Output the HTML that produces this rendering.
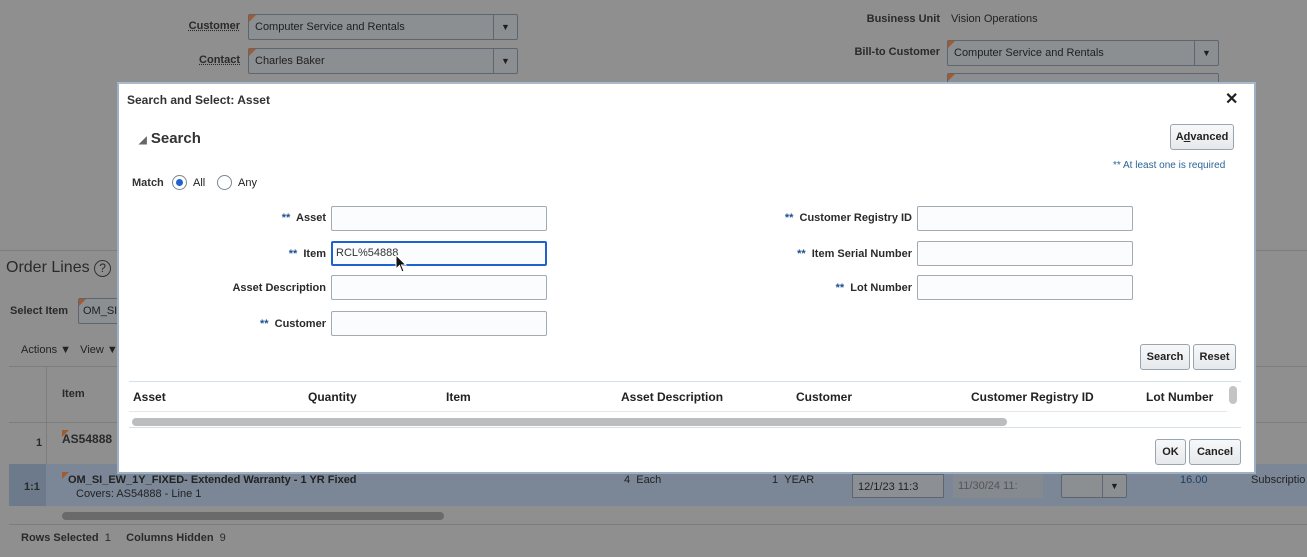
<!DOCTYPE html>
<html style="background:#8f8f8f"><head><style>
*{box-sizing:border-box;margin:0;padding:0}
html{background:#8f8f8f}
body{width:1307px;height:557px;overflow:hidden;background:#8f8f8f;font-family:"Liberation Sans",Arial,sans-serif;font-size:11px;color:#1e1e1e;position:relative}
.a{position:absolute}
.lbl{font-weight:bold;color:#2a2a2a;text-align:right}
.bginp{position:absolute;border:1px solid #5d6670;background:#8c8f92;height:26px;border-radius:2px}
.bginp .dd{position:absolute;right:0;top:0;bottom:0;width:24px;border-left:1px solid #5d6670;text-align:center;line-height:24px;font-size:9px}
.tri{position:absolute;left:0;top:0;width:0;height:0;border-top:7px solid #a35a2e;border-right:7px solid transparent}
.dlg{position:absolute;left:117px;top:82px;width:1139px;height:392px;background:#fff;border:2px solid #9db0c4;border-top-color:#a8bbcd}
.inp{position:absolute;width:216px;height:25px;border:1px solid #a2aab2;border-radius:2px;background:#fbfcfe}
.st{color:#1d4f91;font-weight:bold;font-size:11px}
.btn{position:absolute;height:26px;border:1px solid #98a4b0;border-radius:3px;background:linear-gradient(#f7f8f9,#e6e9ec);font-weight:bold;font-size:11px;text-align:center;line-height:24px;color:#222}
.th{position:absolute;top:8px;font-weight:bold;font-size:12px;color:#222}
</style></head><body>
<div class="a" style="left:0;top:0;width:1307px;height:557px;background:#8f8f8f"></div>
<div class="a lbl" style="left:150px;top:20px;width:90px;text-decoration:underline dotted">Customer</div>
<div class="bginp" style="left:248px;top:14px;width:270px;"><div class="tri"></div><span class="a" style="left:6px;top:6px">Computer Service and Rentals</span><div class="dd">▼</div></div>
<div class="a lbl" style="left:150px;top:54px;width:90px;text-decoration:underline dotted">Contact</div>
<div class="bginp" style="left:248px;top:48px;width:270px;"><div class="tri"></div><span class="a" style="left:6px;top:6px">Charles Baker</span><div class="dd">▼</div></div>
<div class="a lbl" style="left:820px;top:13px;width:120px">Business Unit</div>
<div class="a" style="left:951px;top:13px;color:#222">Vision Operations</div>
<div class="a lbl" style="left:800px;top:46px;width:140px">Bill-to Customer</div>
<div class="bginp" style="left:947px;top:40px;width:272px;"><div class="tri"></div><span class="a" style="left:6px;top:6px">Computer Service and Rentals</span><div class="dd">▼</div></div>
<div class="bginp" style="left:947px;top:73px;width:272px;"><div class="tri"></div></div>

<div class="a" style="left:0;top:250px;width:1307px;border-top:1px solid #7d7d7d"></div>
<div class="a" style="left:6px;top:259px;font-size:16px;color:#2a2a2a">Order Lines <span style="display:inline-block;width:17px;height:17px;border:1px solid #333;border-radius:50%;font-size:12px;text-align:center;line-height:15px">?</span></div>
<div class="a lbl" style="left:10px;top:305px">Select Item</div>
<div class="bginp" style="left:78px;top:298px;width:50px;"><div class="tri"></div><span class="a" style="left:4px;top:6px">OM_SI</span></div>
<div class="a" style="left:21px;top:344px;color:#222">Actions ▼ &nbsp; View ▼</div>
<div class="a" style="left:9px;top:366px;width:1298px;border-top:1px solid #7d7d7d"></div>
<div class="a" style="left:46px;top:366px;height:140px;border-left:1px solid #7d7d7d"></div>
<div class="a lbl" style="left:62px;top:388px">Item</div>
<div class="a" style="left:9px;top:422px;width:1298px;border-top:1px solid #7d7d7d"></div>
<div class="a lbl" style="left:36px;top:437px">1</div>
<div class="a lbl" style="left:62px;top:432px;font-size:12px">AS54888</div><div class="tri" style="left:62px;top:430px"></div>
<div class="a" style="left:9px;top:464px;width:1298px;height:42px;background:#7b8797"></div>
<div class="a" style="left:9px;top:464px;width:37px;height:42px;background:#6c7a8c"></div>
<div class="a lbl" style="left:24px;top:481px">1:1</div>
<div class="tri" style="left:62px;top:472px"></div>
<div class="a" style="left:68px;top:474px;font-weight:bold;color:#222">OM_SI_EW_1Y_FIXED- Extended Warranty - 1 YR Fixed</div>
<div class="a" style="left:76px;top:488px;color:#222">Covers: AS54888 - Line 1</div>
<div class="a" style="left:624px;top:474px;color:#222">4 &nbsp;Each</div>
<div class="a" style="left:772px;top:474px;color:#222">1 &nbsp;YEAR</div>
<div class="a" style="left:852px;top:474px;width:92px;height:24px;border:1px solid #5d6670;background:#8c9095;padding:6px 5px;color:#222">12/1/23 11:3</div>
<div class="a" style="left:953px;top:474px;width:90px;height:24px;background:#858990;padding:6px 5px;color:#555">11/30/24 11:</div>
<div class="bginp" style="left:1061px;top:474px;width:66px;height:24px"><div class="dd" style="line-height:22px">▼</div></div>
<div class="a" style="left:1180px;top:474px;color:#1d3f63">16.00</div>
<div class="a" style="left:1251px;top:474px;color:#222">Subscriptio</div>
<div class="a" style="left:62px;top:512px;width:382px;height:8px;border-radius:4px;background:#6a6a6a"></div>
<div class="a" style="left:9px;top:524px;width:1298px;border-top:1px solid #7d7d7d"></div>
<div class="a lbl" style="left:21px;top:532px">Rows Selected &nbsp;<span style="font-weight:normal">1</span> &nbsp;&nbsp;&nbsp;&nbsp;Columns Hidden &nbsp;<span style="font-weight:normal">9</span></div>

<div class="dlg">
 <div class="a" style="left:8px;top:9px;font-weight:bold;font-size:12px;color:#333">Search and Select: Asset</div>
 <div class="a" style="left:1106px;top:5px;font-size:16px;font-weight:bold">✕</div>
 <div class="a" style="left:20px;top:46px;font-size:15px;font-weight:bold;color:#333"><span style="font-size:10px;color:#666">◢</span> Search</div>
 <div class="btn" style="left:1051px;top:40px;width:64px">A<u>d</u>vanced</div>
 <div class="a" style="left:994px;top:76px;font-size:10px;color:#2a6496">** At least one is required</div>
 <div class="a" style="left:13px;top:93px;font-weight:bold;color:#333">Match</div>
 <div class="a" style="left:53px;top:91px;width:15px;height:15px;border:1px solid #7a8796;border-radius:50%"><div class="a" style="left:3px;top:3px;width:7px;height:7px;border-radius:50%;background:#1e62d0"></div></div>
 <div class="a" style="left:74px;top:93px">All</div>
 <div class="a" style="left:98px;top:91px;width:15px;height:15px;border:1px solid #7a8796;border-radius:50%"></div>
 <div class="a" style="left:119px;top:93px">Any</div>

 <div class="a lbl" style="left:60px;top:128px;width:147px"><span class="st">**</span>&nbsp; Asset</div>
 <div class="inp" style="left:212px;top:122px"></div>
 <div class="a lbl" style="left:60px;top:164px;width:147px"><span class="st">**</span>&nbsp; Item</div>
 <div class="inp" style="left:212px;top:157px;border:2px solid #1e62d0;padding:4px 3px;color:#333">RCL%54888</div>
 <svg class="a" style="left:276px;top:170px" width="14" height="20" viewBox="0 0 14 20"><path d="M1 1 L1 15 L4.5 11.5 L7 18 L9 17 L6.5 11 L11 11 Z" fill="#111" stroke="#fff" stroke-width="1"/></svg>
 <div class="a lbl" style="left:60px;top:198px;width:147px">Asset Description</div>
 <div class="inp" style="left:212px;top:191px"></div>
 <div class="a lbl" style="left:60px;top:234px;width:147px"><span class="st">**</span>&nbsp; Customer</div>
 <div class="inp" style="left:212px;top:227px"></div>

 <div class="a lbl" style="left:600px;top:128px;width:193px"><span class="st">**</span>&nbsp; Customer Registry ID</div>
 <div class="inp" style="left:798px;top:122px"></div>
 <div class="a lbl" style="left:600px;top:164px;width:193px"><span class="st">**</span>&nbsp; Item Serial Number</div>
 <div class="inp" style="left:798px;top:157px"></div>
 <div class="a lbl" style="left:600px;top:198px;width:193px"><span class="st">**</span>&nbsp; Lot Number</div>
 <div class="inp" style="left:798px;top:191px"></div>

 <div class="btn" style="left:1021px;top:260px;width:50px">Search</div>
 <div class="btn" style="left:1074px;top:260px;width:43px">Reset</div>

 <div class="a" style="left:10px;top:297px;width:1112px;height:47px;border-top:1px solid #d6e0e8;border-bottom:1px solid #d6e0e8">
  <div class="a" style="left:0;top:0;width:1098px;height:30px;border-bottom:1px solid #e3e8ec"></div>
  <div class="th" style="left:4px">Asset</div>
  <div class="th" style="left:179px">Quantity</div>
  <div class="th" style="left:317px">Item</div>
  <div class="th" style="left:492px">Asset Description</div>
  <div class="th" style="left:667px">Customer</div>
  <div class="th" style="left:842px">Customer Registry ID</div>
  <div class="th" style="left:1017px">Lot Number</div>
  <div class="a" style="left:1100px;top:4px;width:8px;height:18px;border-radius:4px;background:#c4c4c4"></div>
  <div class="a" style="left:3px;top:36px;width:875px;height:8px;border-radius:4px;background:#bdbdbd"></div>
 </div>
 <div class="btn" style="left:1036px;top:355px;width:31px">OK</div>
 <div class="btn" style="left:1070px;top:355px;width:52px">Cancel</div>
</div>
</body></html>
